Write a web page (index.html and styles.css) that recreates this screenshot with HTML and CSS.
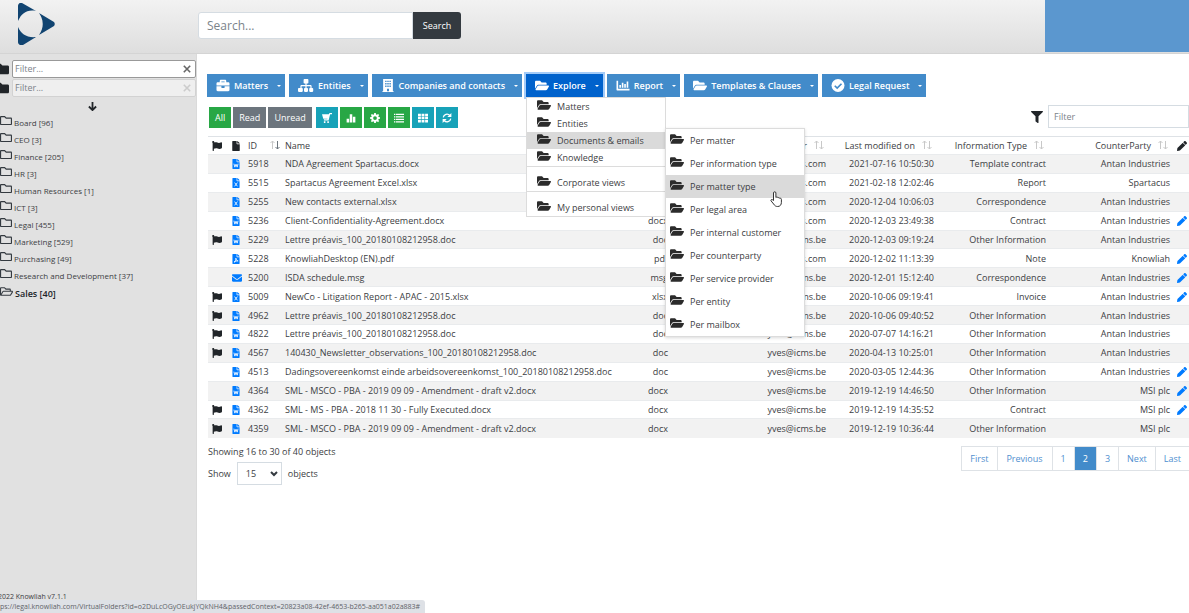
FILE: index.html
```html
<!DOCTYPE html>
<html lang="en">
<head>
    <meta charset="UTF-8">
    <meta name="viewport" content="width=device-width, initial-scale=1.0">
    <title>Knowliah</title>
    <link rel="stylesheet" href="styles.css">
</head>
<body>

    <!-- Icon sprite -->
    <svg class="sprite" aria-hidden="true">
        <symbol id="folder" viewBox="0 0 512 512"><path d="M464 128H272l-64-64H48C21.500 64 0 85.500 0 112v288c0 26.500 21.500 48 48 48h416c26.500 0 48-21.500 48-48V176c0-26.500-21.500-48-48-48z"/></symbol>
        <symbol id="folder-line" viewBox="0 0 512 512"><path d="M464 128H272l-54.600-54.600c-6-6-14.100-9.400-22.600-9.400H48C21.500 64 0 85.500 0 112v288c0 26.500 21.500 48 48 48h416c26.500 0 48-21.500 48-48V176c0-26.500-21.500-48-48-48zm0 272H48V112h140l54.600 54.600c6 6 14.100 9.400 22.600 9.400H464v224z"/></symbol>
        <symbol id="folder-open-line" viewBox="0 0 576 512"><path d="M527.900 224H480v-48c0-26.500-21.500-48-48-48H272l-64-64H48C21.500 64 0 85.500 0 112v288c0 26.500 21.500 48 48 48h400c16.500 0 31.900-8.500 40.700-22.600l79.900-128c20-31.900-3-73.400-40.700-73.400zM48 118c0-3.300 2.700-6 6-6h134.100l64 64H426c3.300 0 6 2.700 6 6v42H152c-16.800 0-32.400 8.800-41.100 23.200L48 351.400zm400 282H72l77.200-128H528z"/></symbol>
        <symbol id="folder-open" viewBox="0 0 576 512"><path d="M572.700 292.100L500.300 416.200A64 64 0 0 1 445 448H45c-18.500 0-30-20-20.700-36l72.400-124.200A64 64 0 0 1 152 256h400c18.500 0 30 20 20.700 36.100zM152 224h328v-48c0-26.500-21.500-48-48-48H272l-64-64H48C21.500 64 0 85.500 0 112v278l69-118.400C86.200 242.200 118 224 152 224z"/></symbol>
        <symbol id="briefcase" viewBox="0 0 512 512"><path d="M320 336c0 8.800-7.200 16-16 16h-96c-8.800 0-16-7.200-16-16v-48H0v144c0 25.600 22.400 48 48 48h416c25.600 0 48-22.400 48-48V288H320zM464 128h-80V80c0-25.600-22.400-48-48-48H176c-25.600 0-48 22.400-48 48v48H48c-25.600 0-48 22.400-48 48v80h512v-80c0-25.600-22.400-48-48-48zm-144 0H192V96h128z"/></symbol>
        <symbol id="sitemap" viewBox="0 0 640 512"><path d="M128 352H96v-64c0-27 21-48 48-48h152v-64h-40c-18 0-32-14-32-32V32c0-18 14-32 32-32h128c18 0 32 14 32 32v112c0 18-14 32-32 32h-40v64h152c27 0 48 21 48 48v64h32c18 0 32 14 32 32v96c0 18-14 32-32 32h-96c-18 0-32-14-32-32v-96c0-18 14-32 32-32h16v-64H344v64h24c18 0 32 14 32 32v96c0 18-14 32-32 32h-96c-18 0-32-14-32-32v-96c0-18 14-32 32-32h24v-64H144v64h16c18 0 32 14 32 32v96c0 18-14 32-32 32H32c-18 0-32-14-32-32v-96c0-18 14-32 32-32z"/></symbol>
        <symbol id="building" viewBox="0 0 448 512"><path fill-rule="evenodd" d="M32 0h384v480h32v32H0v-32h32zM112 64v56h56V64zm84 0v56h56V64zm84 0v56h56V64zM112 160v56h56v-56zm84 0v56h56v-56zm84 0v56h56v-56zM112 256v56h56v-56zm84 0v56h56v-56zm84 0v56h56v-56zM184 380v100h80V380z"/></symbol>
        <symbol id="chart" viewBox="0 0 512 512"><path d="M0 64h64v320h448v64H24c-13 0-24-11-24-24zM112 240h64v104h-64zM208 150h64v194h-64zM304 200h64v144h-64zM400 96h64v248h-64z"/></symbol>
        <symbol id="check" viewBox="0 0 16 16"><circle cx="8" cy="8" r="8"/><path class="check-mark" d="M4 8.300l3 3 5.300-5.500"/></symbol>
        <symbol id="cart" viewBox="0 0 16 16"><path d="M0 2h11l1-2h4v2h-3l-2.500 10H3V10h5.500l.3-1H2z"/><path d="M3 13h2.500v3H3zM8.500 13H11v3H8.500z"/></symbol>
        <symbol id="bars" viewBox="0 0 16 16"><path d="M1 9h4v6H1zM6 2h4v13H6zM11 6h4v9h-4z"/></symbol>
        <symbol id="gear" viewBox="0 0 16 16"><path fill-rule="evenodd" d="M6.700 0h2.600l.4 2.200 1.300.5L12.900 1.400l1.700 1.700L13.300 5l.5 1.300 2.200.4v2.600l-2.200.4-.5 1.300 1.300 1.900-1.700 1.700L11 13.300l-1.300.5-.4 2.200H6.700l-.4-2.200L5 13.300l-1.900 1.300-1.700-1.700L2.700 11l-.5-1.300L0 9.300V6.700l2.200-.4L2.700 5 1.400 3.100l1.700-1.700L5 2.700l1.300-.5zM8 5a3 3 0 1 0 0 6 3 3 0 0 0 0-6z"/></symbol>
        <symbol id="list" viewBox="0 0 16 16"><path d="M0 1h2v2H0zM3 1h13v2H3zM0 5h2v2H0zM3 5h13v2H3zM0 9h2v2H0zM3 9h13v2H3zM0 13h2v2H0zM3 13h13v2H3z"/></symbol>
        <symbol id="grid" viewBox="0 0 16 16"><path d="M0 1h4.600v4H0zM5.700 1h4.600v4H5.700zM11.400 1H16v4h-4.600zM0 6h4.600v4H0zM5.700 6h4.600v4H5.700zM11.400 6H16v4h-4.600zM0 11h4.600v4H0zM5.700 11h4.600v4H5.700zM11.400 11H16v4h-4.600z"/></symbol>
        <symbol id="refresh" viewBox="0 0 16 16"><path class="stroke" d="M2 7a6 6 0 0 1 10.500-3M14 9a6 6 0 0 1-10.500 3"/><path d="M15 0v6.500H8.500zM1 16V9.500h6.500z"/></symbol>
        <symbol id="filter" viewBox="0 0 512 512"><path d="M488 0H24C2.700 0-8 25.900 7 41l185 185v206c0 7.800 3.800 15.200 10.200 19.700l80 56C298 518.700 320 507.500 320 488V226L505 41C520 25.900 509.300 0 488 0z"/></symbol>
        <symbol id="flag" viewBox="0 0 512 512"><path d="M349.600 98.800C296 98.800 251.700 64 184.300 64c-25 0-47.300 4.400-68 12a56 56 0 0 0 3.600-23.500C118 24 94.800 1.200 66.300 0 34.300-1.200 8 24.300 8 56c0 19 9.500 35.800 24 46v386c0 13.300 10.700 24 24 24h16c13.300 0 24-10.700 24-24v-94.400c28.300-12 63.600-22 114.400-22 53.600 0 97.900 34.700 165.300 34.700 48 0 86.600-16.300 122.500-40.900 8.600-6 13.800-15.900 13.800-26.400V96c0-23.400-24.300-38.900-45.500-29-34.300 15.900-76.400 31.800-116.900 31.800z"/></symbol>
        <symbol id="file" viewBox="0 0 384 512"><path d="M224 136V0H24C10.700 0 0 10.700 0 24v464c0 13.300 10.700 24 24 24h336c13.300 0 24-10.700 24-24V160H248c-13.200 0-24-10.800-24-24zm160-14v6H256V0h6c6.400 0 12.500 2.500 17 7l98 98c4.500 4.500 7 10.600 7 17z"/></symbol>
        <symbol id="word" viewBox="0 0 384 512"><use href="#file"/><path class="mark" d="M85 240l48 176 59-150 59 150 48-176"/></symbol>
        <symbol id="excel" viewBox="0 0 384 512"><use href="#file"/><path class="mark" d="M120 235l144 190M264 235L120 425"/></symbol>
        <symbol id="pdf" viewBox="0 0 384 512"><use href="#file"/><path class="mark" d="M90 420c60-30 110-110 95-205 10 90 60 130 115 140-70-10-140 5-210 65"/></symbol>
        <symbol id="mail" viewBox="0 0 512 512"><path d="M48 64h416c26 0 48 22 48 48v20L292 300c-21 16-51 16-72 0L0 132v-20c0-26 22-48 48-48zM0 180l200 152c33 25 79 25 112 0l200-152v220c0 26-22 48-48 48H48c-26 0-48-22-48-48z"/></symbol>
        <symbol id="pencil" viewBox="0 0 512 512"><path d="M498 142l-46 46c-4.700 4.700-12.300 4.700-17 0L324 77c-4.700-4.700-4.700-12.300 0-17l46-46c18.700-18.700 49-18.700 67.900 0L498 74c18.800 18.700 18.800 49 0 68zM284 100L21.600 362.400.4 484c-2.900 16.400 11.400 30.600 27.800 27.800l121.500-21.300L412.300 228c4.700-4.700 4.700-12.300 0-17l-111-111c-4.800-4.700-12.400-4.700-17.300 0z"/></symbol>
        <symbol id="sort" viewBox="0 0 10 10"><path class="up" d="M2.500 9V1M.5 3l2-2 2 2"/><path class="down" d="M7.500 1v8M5.500 7l2 2 2-2"/></symbol>
        <symbol id="sort-desc" viewBox="0 0 10 10"><path class="up" d="M2.500 9V1M.5 3l2-2 2 2"/><path class="down dark" d="M7.500 1v8M5.500 7l2 2 2-2"/></symbol>
        <symbol id="arrow-down" viewBox="0 0 10 10"><path class="stroke" d="M5 0v9M1 5l4 4 4-4"/></symbol>
        <symbol id="cross" viewBox="0 0 10 10"><path class="stroke" d="M1 1l8 8M9 1L1 9"/></symbol>
    </svg>

    <header class="header">
        <a class="logo" href="#" aria-label="Knowliah home">
            <svg viewBox="0 0 38 42">
                <path d="M0 18V3c0-2 2-4 4-3l14 8C9 6 3 11 0 18z"/>
                <path d="M21 10l15 9c1 1 1 3 0 4l-15 9c5-7 5-15 0-22z"/>
                <path d="M0 24c3 7 9 11 18 10L5 42c-3 1-5-1-5-3z"/>
            </svg>
        </a>
        <form class="search">
            <input type="text" placeholder="Search..." aria-label="Search">
            <button type="button">Search</button>
        </form>
        <div class="account"></div>
    </header>

    <div class="layout">
        <aside class="sidebar">
            <div class="side-filter">
                <svg><use href="#folder"/></svg>
                <div class="side-box">
                    <input type="text" placeholder="Filter..." aria-label="Filter folders">
                    <button type="button" aria-label="Clear folder filter"><svg><use href="#cross"/></svg></button>
                </div>
            </div>
            <div class="side-filter muted">
                <svg><use href="#folder"/></svg>
                <div class="side-box">
                    <input type="text" placeholder="Filter..." aria-label="Filter subfolders">
                    <button type="button" aria-label="Clear subfolder filter"><svg><use href="#cross"/></svg></button>
                </div>
            </div>
            <button class="expand" type="button" aria-label="Expand"><svg><use href="#arrow-down"/></svg></button>
            <ul class="tree">
                <li><a href="#"><svg><use href="#folder-line"/></svg>Board [96]</a></li>
                <li><a href="#"><svg><use href="#folder-line"/></svg>CEO [3]</a></li>
                <li><a href="#"><svg><use href="#folder-line"/></svg>Finance [205]</a></li>
                <li><a href="#"><svg><use href="#folder-line"/></svg>HR [3]</a></li>
                <li><a href="#"><svg><use href="#folder-line"/></svg>Human Resources [1]</a></li>
                <li><a href="#"><svg><use href="#folder-line"/></svg>ICT [3]</a></li>
                <li><a href="#"><svg><use href="#folder-line"/></svg>Legal [455]</a></li>
                <li><a href="#"><svg><use href="#folder-line"/></svg>Marketing [529]</a></li>
                <li><a href="#"><svg><use href="#folder-line"/></svg>Purchasing [49]</a></li>
                <li><a href="#"><svg><use href="#folder-line"/></svg>Research and Development [37]</a></li>
                <li class="selected"><a href="#"><svg><use href="#folder-open-line"/></svg>Sales [40]</a></li>
            </ul>
            <p class="version">2022 Knowliah v7.1.1</p>
        </aside>

        <main class="content">
            <nav class="nav">
                <div class="nav-item"><button type="button" class="nav-btn"><svg><use href="#briefcase"/></svg>Matters<i class="caret"></i></button></div>
                <div class="nav-item"><button type="button" class="nav-btn"><svg class="wide"><use href="#sitemap"/></svg>Entities<i class="caret"></i></button></div>
                <div class="nav-item"><button type="button" class="nav-btn"><svg><use href="#building"/></svg>Companies and contacts<i class="caret"></i></button></div>
                <div class="nav-item">
                    <button type="button" class="nav-btn active"><svg><use href="#folder-open"/></svg>Explore<i class="caret"></i></button>
                    <ul class="menu">
                        <li><a href="#"><svg><use href="#folder-open"/></svg>Matters</a></li>
                        <li><a href="#"><svg><use href="#folder-open"/></svg>Entities</a></li>
                        <li class="open">
                            <a href="#"><svg><use href="#folder-open"/></svg>Documents &amp; emails</a>
                            <ul class="submenu">
                                <li><a href="#"><svg><use href="#folder-open"/></svg>Per matter</a></li>
                                <li><a href="#"><svg><use href="#folder-open"/></svg>Per information type</a></li>
                                <li class="hover">
                                    <a href="#"><svg><use href="#folder-open"/></svg>Per matter type</a>
                                    <svg class="pointer" viewBox="0 0 12 16"><path d="M3.500 9.500V2a1.200 1.200 0 0 1 2.400 0v4.500c.8-.8 2-.5 2.100.4.700-.6 1.600-.3 1.800.5.800-.4 1.600 0 1.600.9v3c0 2.600-1.400 4.200-3.700 4.200-2 0-3-.8-4-2.400L1 9.800c-.5-1 .8-1.800 1.600-1z"/></svg>
                                </li>
                                <li><a href="#"><svg><use href="#folder-open"/></svg>Per legal area</a></li>
                                <li><a href="#"><svg><use href="#folder-open"/></svg>Per internal customer</a></li>
                                <li><a href="#"><svg><use href="#folder-open"/></svg>Per counterparty</a></li>
                                <li><a href="#"><svg><use href="#folder-open"/></svg>Per service provider</a></li>
                                <li><a href="#"><svg><use href="#folder-open"/></svg>Per entity</a></li>
                                <li><a href="#"><svg><use href="#folder-open"/></svg>Per mailbox</a></li>
                            </ul>
                        </li>
                        <li><a href="#"><svg><use href="#folder-open"/></svg>Knowledge</a></li>
                        <li class="divided"><a href="#"><svg><use href="#folder-open"/></svg>Corporate views</a></li>
                        <li class="divided"><a href="#"><svg><use href="#folder-open"/></svg>My personal views</a></li>
                    </ul>
                </div>
                <div class="nav-item"><button type="button" class="nav-btn"><svg><use href="#chart"/></svg>Report<i class="caret"></i></button></div>
                <div class="nav-item"><button type="button" class="nav-btn"><svg><use href="#folder-open"/></svg>Templates &amp; Clauses<i class="caret"></i></button></div>
                <div class="nav-item"><button type="button" class="nav-btn"><svg><use href="#check"/></svg>Legal Request<i class="caret"></i></button></div>
            </nav>

            <div class="toolbar">
                <button type="button" class="tool green">All</button>
                <button type="button" class="tool gray">Read</button>
                <button type="button" class="tool gray">Unread</button>
                <div class="tool-icons">
                    <button type="button" class="tool teal" aria-label="Cart"><svg><use href="#cart"/></svg></button>
                    <button type="button" class="tool green" aria-label="Statistics"><svg><use href="#bars"/></svg></button>
                    <button type="button" class="tool green" aria-label="Settings"><svg><use href="#gear"/></svg></button>
                    <button type="button" class="tool green" aria-label="List view"><svg><use href="#list"/></svg></button>
                    <button type="button" class="tool teal" aria-label="Grid view"><svg><use href="#grid"/></svg></button>
                    <button type="button" class="tool teal" aria-label="Refresh"><svg><use href="#refresh"/></svg></button>
                </div>
                <label class="table-filter"><svg><use href="#filter"/></svg><input type="text" placeholder="Filter" aria-label="Filter"></label>
            </div>

            <table class="docs">
                <colgroup>
                    <col class="c-flag"><col class="c-icon"><col class="c-id"><col><col class="c-type">
                    <col class="c-user"><col class="c-date"><col class="c-info"><col class="c-party"><col class="c-edit">
                </colgroup>
                <thead>
                    <tr>
                        <th><svg class="flag"><use href="#flag"/></svg></th>
                        <th><svg class="file"><use href="#file"/></svg></th>
                        <th class="sorted">ID<svg class="sort"><use href="#sort-desc"/></svg></th>
                        <th>Name</th>
                        <th>Type</th>
                        <th>Modifier<svg class="sort"><use href="#sort"/></svg></th>
                        <th>Last modified on<svg class="sort"><use href="#sort"/></svg></th>
                        <th>Information Type<svg class="sort"><use href="#sort"/></svg></th>
                        <th>CounterParty<svg class="sort"><use href="#sort"/></svg></th>
                        <th><svg class="pencil"><use href="#pencil"/></svg></th>
                    </tr>
                </thead>
                <tbody>
                    <tr><td></td><td><svg class="file"><use href="#word"/></svg></td><td>5918</td><td>NDA Agreement Spartacus.docx</td><td>docx</td><td>y@icms.com</td><td>2021-07-16 10:50:30</td><td>Template contract</td><td>Antan Industries</td><td></td></tr>
                    <tr><td></td><td><svg class="file"><use href="#excel"/></svg></td><td>5515</td><td>Spartacus Agreement Excel.xlsx</td><td>xlsx</td><td>y@icms.com</td><td>2021-02-18 12:02:46</td><td>Report</td><td>Spartacus</td><td></td></tr>
                    <tr><td></td><td><svg class="file"><use href="#excel"/></svg></td><td>5255</td><td>New contacts external.xlsx</td><td>xlsx</td><td>y@icms.com</td><td>2020-12-04 10:06:03</td><td>Correspondence</td><td>Antan Industries</td><td></td></tr>
                    <tr><td></td><td><svg class="file"><use href="#word"/></svg></td><td>5236</td><td>Client-Confidentiality-Agreement.docx</td><td>docx</td><td>y@icms.com</td><td>2020-12-03 23:49:38</td><td>Contract</td><td>Antan Industries</td><td><svg class="pencil"><use href="#pencil"/></svg></td></tr>
                    <tr><td><svg class="flag"><use href="#flag"/></svg></td><td><svg class="file"><use href="#word"/></svg></td><td>5229</td><td>Lettre préavis_100_20180108212958.doc</td><td>doc</td><td>yves@icms.be</td><td>2020-12-03 09:19:24</td><td>Other Information</td><td>Antan Industries</td><td></td></tr>
                    <tr><td></td><td><svg class="file"><use href="#pdf"/></svg></td><td>5228</td><td>KnowliahDesktop (EN).pdf</td><td>pdf</td><td>y@icms.com</td><td>2020-12-02 11:13:39</td><td>Note</td><td>Knowliah</td><td><svg class="pencil"><use href="#pencil"/></svg></td></tr>
                    <tr><td></td><td><svg class="mail"><use href="#mail"/></svg></td><td>5200</td><td>ISDA schedule.msg</td><td>msg</td><td>yves@icms.be</td><td>2020-12-01 15:12:40</td><td>Correspondence</td><td>Antan Industries</td><td><svg class="pencil"><use href="#pencil"/></svg></td></tr>
                    <tr><td><svg class="flag"><use href="#flag"/></svg></td><td><svg class="file"><use href="#excel"/></svg></td><td>5009</td><td>NewCo - Litigation Report - APAC - 2015.xlsx</td><td>xlsx</td><td>yves@icms.be</td><td>2020-10-06 09:19:41</td><td>Invoice</td><td>Antan Industries</td><td><svg class="pencil"><use href="#pencil"/></svg></td></tr>
                    <tr><td><svg class="flag"><use href="#flag"/></svg></td><td><svg class="file"><use href="#word"/></svg></td><td>4962</td><td>Lettre préavis_100_20180108212958.doc</td><td>doc</td><td>yves@icms.be</td><td>2020-10-06 09:40:52</td><td>Other Information</td><td>Antan Industries</td><td></td></tr>
                    <tr><td><svg class="flag"><use href="#flag"/></svg></td><td><svg class="file"><use href="#word"/></svg></td><td>4822</td><td>Lettre préavis_100_20180108212958.doc</td><td>doc</td><td>yves@icms.be</td><td>2020-07-07 14:16:21</td><td>Other Information</td><td>Antan Industries</td><td></td></tr>
                    <tr><td><svg class="flag"><use href="#flag"/></svg></td><td><svg class="file"><use href="#word"/></svg></td><td>4567</td><td>140430_Newsletter_observations_100_20180108212958.doc</td><td>doc</td><td>yves@icms.be</td><td>2020-04-13 10:25:01</td><td>Other Information</td><td>Antan Industries</td><td></td></tr>
                    <tr><td></td><td><svg class="file"><use href="#word"/></svg></td><td>4513</td><td>Dadingsovereenkomst einde arbeidsovereenkomst_100_20180108212958.doc</td><td>doc</td><td>yves@icms.be</td><td>2020-03-05 12:44:36</td><td>Other Information</td><td>Antan Industries</td><td><svg class="pencil"><use href="#pencil"/></svg></td></tr>
                    <tr><td></td><td><svg class="file"><use href="#word"/></svg></td><td>4364</td><td>SML - MSCO - PBA - 2019 09 09 - Amendment - draft v2.docx</td><td>docx</td><td>yves@icms.be</td><td>2019-12-19 14:46:50</td><td>Other Information</td><td>MSI plc</td><td><svg class="pencil"><use href="#pencil"/></svg></td></tr>
                    <tr><td><svg class="flag"><use href="#flag"/></svg></td><td><svg class="file"><use href="#word"/></svg></td><td>4362</td><td>SML - MS - PBA - 2018 11 30 - Fully Executed.docx</td><td>docx</td><td>yves@icms.be</td><td>2019-12-19 14:35:52</td><td>Contract</td><td>MSI plc</td><td><svg class="pencil"><use href="#pencil"/></svg></td></tr>
                    <tr><td><svg class="flag"><use href="#flag"/></svg></td><td><svg class="file"><use href="#word"/></svg></td><td>4359</td><td>SML - MSCO - PBA - 2019 09 09 - Amendment - draft v2.docx</td><td>docx</td><td>yves@icms.be</td><td>2019-12-19 10:36:44</td><td>Other Information</td><td>MSI plc</td><td></td></tr>
                </tbody>
            </table>

            <div class="table-footer">
                <div>
                    <p>Showing 16 to 30 of 40 objects</p>
                    <label class="page-size">Show
                        <span class="select-wrap">
                            <select>
                                <option>15</option>
                                <option>30</option>
                            </select>
                            <svg viewBox="0 0 8 6"><path d="M1 1l3 3 3-3"/></svg>
                        </span>
                        objects
                    </label>
                </div>
                <div class="pagination">
                    <a href="#">First</a>
                    <a href="#">Previous</a>
                    <a href="#">1</a>
                    <a href="#" class="current">2</a>
                    <a href="#">3</a>
                    <a href="#">Next</a>
                    <a href="#">Last</a>
                </div>
            </div>
        </main>
    </div>

    <div class="status">ps://legal.knowliah.com/VirtualFolders?id=o2DuLcOGyOEukjYQkNH4&amp;passedContext=20823a08-42ef-4653-b265-aa051a02a883#</div>

</body>
</html>
```
FILE: styles.css
```css
* {
    box-sizing: border-box;
}
html, body {
    height: 100%;
}
body {
    margin: 0;
    display: flex;
    flex-direction: column;
    font-family: "Open Sans", sans-serif;
    font-size: 9px;
    line-height: 16px;
    color: #3c4043;
    background: #fff;
    overflow: hidden;
}
ul, p {
    margin: 0;
    padding: 0;
    list-style: none;
}
a {
    color: inherit;
    text-decoration: none;
}
button, input, select {
    font: inherit;
    color: inherit;
    margin: 0;
    border: none;
    border-radius: 0;
    outline: none;
}
button {
    padding: 0;
    background: none;
    cursor: pointer;
}
input::placeholder {
    color: #7b838a;
    opacity: 1;
}
svg {
    display: block;
    flex: none;
    fill: currentColor;
}
.sprite {
    position: absolute;
    width: 0;
    height: 0;
}
.stroke {
    fill: none;
    stroke: currentColor;
    stroke-width: 2;
}
.mark {
    fill: none;
    stroke: #fff;
    stroke-width: 44;
}
.check-mark {
    fill: none;
    stroke: #428bca;
    stroke-width: 2;
}

/* Header */
.header {
    display: flex;
    align-items: flex-start;
    height: 54px;
    flex: none;
    background: linear-gradient(#f2f2f2, #dedede);
    border-bottom: 1px solid #d4d4d4;
}
.logo {
    width: 198px;
    padding: 3px 0 0 18px;
}
.logo svg {
    width: 38px;
    height: 42px;
    fill: #114471;
}
.search {
    display: flex;
    margin-top: 12px;
}
.search input {
    width: 215px;
    height: 27px;
    padding: 0 8px;
    font-size: 12px;
    background: #fff;
    border: 1px solid #d5dce2;
    border-radius: 3px 0 0 3px;
}
.search button {
    width: 48px;
    height: 27px;
    color: #fff;
    background: #343a40;
    border-radius: 0 3px 3px 0;
}
.account {
    width: 144px;
    height: 52px;
    margin-left: auto;
    background: #5b97cf;
}

.layout {
    display: flex;
    flex: 1;
    min-height: 0;
}

/* Sidebar */
.sidebar {
    display: flex;
    flex-direction: column;
    width: 197px;
    flex: none;
    padding: 6px 0 8px;
    background: #e1e1e1;
    border-right: 1px solid #dadada;
}
.side-filter {
    display: flex;
    align-items: center;
    margin-bottom: 1px;
    color: #212529;
}
.side-filter > svg {
    width: 14px;
    height: 14px;
    margin-left: -5px;
    margin-right: 3px;
}
.side-box {
    display: flex;
    align-items: center;
    flex: 1;
    height: 18px;
    padding: 0 4px 0 2px;
    background: #fff;
    border: 1px solid #999;
    border-radius: 2px;
}
.side-box input {
    flex: 1;
    min-width: 0;
    padding: 0;
    background: none;
}
.side-box svg {
    width: 8px;
    height: 8px;
    color: #666;
}
.muted .side-box {
    background: #efefef;
    border-color: #d2d2d2;
}
.muted .side-box svg {
    color: #ccc;
}
.expand {
    align-self: center;
    margin: 4px 12px 3px 0;
    color: #212529;
}
.expand svg {
    width: 9px;
    height: 9px;
}
.tree {
    font-size: 8px;
}
.tree a {
    display: flex;
    height: 17px;
    gap: 3px;
    line-height: 17px;
}
.tree svg {
    width: 12px;
    height: 13px;
    margin-right: -1px;
    color: #343a40;
}
.tree .selected {
    padding-top: 1px;
    font-size: 9px;
    font-weight: 600;
    color: #212529;
}
.tree .selected svg {
    width: 13px;
}
.version {
    margin-top: auto;
    margin-left: -2px;
    font-size: 7px;
}

/* Main column */
.content {
    flex: 1;
    min-width: 0;
    padding: 20px 0 0 11px;
}
.nav {
    display: flex;
    gap: 4px;
    margin-left: -1px;
}
.nav-item {
    position: relative;
}
.nav-btn {
    display: flex;
    align-items: center;
    height: 23px;
    padding: 0 4px 0 9px;
    font-weight: 600;
    color: #fff;
    background: #428bca;
    white-space: nowrap;
}
.nav-btn svg {
    width: 14px;
    height: 13px;
    margin-right: 4px;
}
.nav-btn .wide {
    width: 16px;
}
.nav-btn.active {
    background: #0062cc;
    box-shadow: 0 0 0 2px #a3cbf8;
}
.caret {
    margin-left: 9px;
    border: 2px solid transparent;
    border-top-color: #fff;
    border-bottom: none;
}

/* Drop-down menus */
.menu, .submenu {
    position: absolute;
    z-index: 2;
    width: 140px;
    background: #fff;
    border: 1px solid #dcdcdc;
}
.menu {
    top: 100%;
    left: 0;
}
.menu a {
    display: flex;
    gap: 6px;
    height: 17px;
    padding-left: 10px;
    line-height: 18px;
    white-space: nowrap;
}
.menu svg {
    width: 14px;
    height: 14px;
    color: #2b2b2b;
}
.menu li {
    position: relative;
}
.menu .open > a, .menu .hover {
    background: #dadada;
}
.menu .divided {
    padding-top: 7px;
    border-top: 1px solid #dcdcdc;
}
.submenu {
    top: -4px;
    left: 100%;
    box-shadow: 0 1px 3px rgba(0, 0, 0, 0.15);
}
.submenu a {
    height: 23px;
    padding: 3px 0 0 4px;
}
.menu .pointer {
    position: absolute;
    top: 16px;
    right: 22px;
    width: 12px;
    height: 16px;
    fill: #fff;
    stroke: #333;
}

/* Toolbar */
.toolbar {
    display: flex;
    align-items: flex-end;
    gap: 2px;
    margin-top: 8px;
    padding-left: 1px;
}
.tool {
    height: 21px;
    padding: 0 6px;
    color: #fff;
}
.green {
    background: #28a745;
}
.gray {
    background: #6c757d;
}
.teal {
    background: #17a2b8;
}
.tool-icons {
    display: flex;
    gap: 2px;
    margin-left: 2px;
}
.tool-icons svg {
    width: 10px;
    height: 10px;
}
.table-filter {
    display: flex;
    align-items: center;
    gap: 5px;
    margin-left: auto;
    color: #212529;
}
.table-filter svg {
    width: 12px;
    height: 12px;
}
.table-filter input {
    width: 141px;
    height: 23px;
    padding: 0 5px;
    border: 1px solid #d5dce2;
}

/* Documents table */
.docs {
    width: 100%;
    height: 302px;
    margin-top: 8px;
    table-layout: fixed;
    border-collapse: collapse;
    border-top: 1px solid #dee2e6;
}
.c-flag { width: 24px; }
.c-icon { width: 16px; }
.c-id { width: 37px; }
.c-type { width: 50px; }
.c-user { width: 158px; }
.c-date { width: 108px; }
.c-info { width: 112px; }
.c-party { width: 124px; }
.c-edit { width: 19px; }
th, td {
    height: 18px;
    padding: 1px 0 0;
    font-weight: 400;
    text-align: right;
    white-space: nowrap;
}
th:nth-child(-n+4), td:nth-child(-n+4) {
    text-align: left;
}
tbody tr:nth-child(odd) {
    background: #f2f2f2;
}
td {
    border-top: 1px solid #e9ebed;
}
.flag, .file, .mail, .pencil {
    width: 10px;
    height: 10px;
}
.flag {
    margin-left: 4px;
    color: #212529;
}
.file {
    width: 8px;
}
.pencil {
    margin-left: 7px;
}
th .file, th .pencil {
    color: #212529;
}
td .file, td .mail, td .pencil {
    color: #007bff;
}
.sort {
    display: inline-block;
    width: 10px;
    height: 10px;
    margin: 0 2px 0 7px;
    vertical-align: -1px;
}
.up, .down {
    fill: none;
    stroke: #c8c8c8;
}
.dark {
    stroke: #6c757d;
}
.sorted .sort {
    margin-left: 13px;
    margin-right: 0;
}

/* Below the table */
.table-footer {
    display: flex;
    justify-content: space-between;
    align-items: flex-start;
    padding-top: 6px;
}
.page-size {
    display: flex;
    align-items: center;
    gap: 6px;
    margin-top: 2px;
}
.select-wrap {
    position: relative;
}
.select-wrap select {
    display: block;
    width: 45px;
    height: 23px;
    padding: 0 8px;
    background: #fff;
    border: 1px solid #d5dce2;
    appearance: none;
}
.select-wrap svg {
    position: absolute;
    top: 9px;
    right: 4px;
    width: 8px;
    height: 6px;
    fill: none;
    stroke: #343a40;
    stroke-width: 2;
}
.pagination {
    display: flex;
    margin-top: 2px;
    border-top: 1px solid #dee2e6;
    border-bottom: 1px solid #dee2e6;
}
.pagination a {
    padding: 0 8px;
    line-height: 23px;
    color: #4f8fcf;
    border-left: 1px solid #dee2e6;
}
.pagination a:first-child, .pagination a:nth-child(2) {
    padding-right: 9px;
}
.pagination .current {
    color: #fff;
    background: #428bca;
}

/* Link address shown while hovering */
.status {
    position: absolute;
    left: 0;
    bottom: 0;
    height: 13px;
    padding-right: 5px;
    font-size: 7px;
    line-height: 13px;
    color: #5f6368;
    background: #dee1e6;
    border-radius: 0 3px 0 0;
}
```
